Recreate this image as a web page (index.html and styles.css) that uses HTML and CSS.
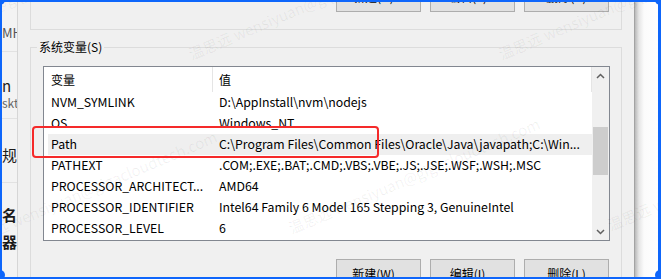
FILE: index.html
```html
<!DOCTYPE html>
<html lang="zh-CN">

<head>
    <meta charset="UTF-8">
    <meta name="viewport" content="width=device-width, initial-scale=1.0">
    <link rel="stylesheet" href="styles.css">
    <title>环境变量</title>
</head>

<body>
    <div class="screen">
        <div class="behind">
            <div class="behind-block b1">
                <div class="bt left mh">MHxx</div>
            </div>
            <div class="behind-block b2">
                <div class="bt left big">n</div>
                <div class="bt left small">sktop</div>
            </div>
            <div class="behind-block b3">
                <div class="bt right big">常规</div>
            </div>
            <div class="behind-block b4">
                <div class="bt right big bold">命名</div>
                <div class="bt right big bold gap">管理器</div>
            </div>
        </div>

        <div class="dialog">
            <div class="user-group">
                <button class="btn">新建(N)...</button>
                <button class="btn">编辑(E)...</button>
                <button class="btn">删除(D)</button>
            </div>

            <fieldset class="sys-group">
                <legend>系统变量(S)</legend>
                <div class="list">
                    <div class="list-main">
                        <div class="list-head">
                            <div class="hcell name">变量</div>
                            <div class="hcell value">值</div>
                        </div>
                        <div class="row">
                            <div class="cell name">NVM_SYMLINK</div>
                            <div class="cell value">D:\AppInstall\nvm\nodejs</div>
                        </div>
                        <div class="row">
                            <div class="cell name">OS</div>
                            <div class="cell value">Windows_NT</div>
                        </div>
                        <div class="row selected">
                            <div class="cell name">Path</div>
                            <div class="cell value">C:\Program Files\Common Files\Oracle\Java\javapath;C:\Win...</div>
                        </div>
                        <div class="row">
                            <div class="cell name">PATHEXT</div>
                            <div class="cell value">.COM;.EXE;.BAT;.CMD;.VBS;.VBE;.JS;.JSE;.WSF;.WSH;.MSC</div>
                        </div>
                        <div class="row">
                            <div class="cell name">PROCESSOR_ARCHITECT...</div>
                            <div class="cell value">AMD64</div>
                        </div>
                        <div class="row">
                            <div class="cell name">PROCESSOR_IDENTIFIER</div>
                            <div class="cell value">Intel64 Family 6 Model 165 Stepping 3, GenuineIntel</div>
                        </div>
                        <div class="row">
                            <div class="cell name">PROCESSOR_LEVEL</div>
                            <div class="cell value">6</div>
                        </div>
                    </div>
                    <div class="scrollbar">
                        <div class="sb-btn">
                            <svg width="9" height="6" viewBox="0 0 9 6"><path d="M1 5 L4.5 1.5 L8 5" fill="none" stroke="#606060" stroke-width="1.5"/></svg>
                        </div>
                        <div class="sb-track">
                            <div class="sb-thumb"></div>
                        </div>
                        <div class="sb-btn">
                            <svg width="9" height="6" viewBox="0 0 9 6"><path d="M1 1 L4.5 4.5 L8 1" fill="none" stroke="#606060" stroke-width="1.5"/></svg>
                        </div>
                    </div>
                </div>
                <div class="btn-row">
                    <button class="btn">新建(W)...</button>
                    <button class="btn">编辑(I)...</button>
                    <button class="btn">删除(L)</button>
                </div>
            </fieldset>
        </div>

        <div class="shadow"></div>
    </div>

    <!-- watermark + annotation layers -->
    <span class="wm" style="left:-117px; top:45px;">温思远 wensiyuan@gigacloudtech.com</span>
    <span class="wm" style="left:193px; top:45px;">温思远 wensiyuan@gigacloudtech.com</span>
    <span class="wm" style="left:503px; top:45px;">温思远 wensiyuan@gigacloudtech.com</span>
    <span class="wm" style="left:-30px; top:232px;">温思远 wensiyuan@gigacloudtech.com</span>
    <span class="wm" style="left:293px; top:219px;">温思远 wensiyuan@gigacloudtech.com</span>
    <span class="wm" style="left:612px; top:216px;">温思远 wensiyuan@gigacloudtech.com</span>

    <div class="mark"></div>

    <div class="frame"></div>
    <div class="dot tl"></div>
    <div class="dot tr"></div>
    <div class="dot bl"></div>
    <div class="dot br"></div>
</body>

</html>
```

FILE: styles.css
```css
body {
    margin: 0;
    font-family: "Noto Sans CJK SC", "Noto Sans", sans-serif;
    background-color: #fff;
    color: #000;
}

.screen {
    display: flex;
    width: 661px;
    height: 279px;
    overflow: hidden;
}

/* window behind the dialog */
.behind {
    flex: none;
    width: 17px;
    border-right: 1px solid #d6d6d6;
    background-color: #f3f3f3;
}

.behind-block {
    border-bottom: 1px solid #e2e2e2;
}

.b1 {
    height: 52px;
    padding-top: 25px;
    box-sizing: border-box;
}

.b2 {
    height: 67px;
    padding-top: 25px;
    box-sizing: border-box;
}

.b3 {
    height: 64px;
    padding-top: 27px;
    box-sizing: border-box;
}

.b4 {
    border-bottom: none;
    padding-top: 23px;
}

.bt {
    display: flex;
    overflow: hidden;
    white-space: nowrap;
    line-height: 16px;
}

.bt.left {
    justify-content: flex-start;
    padding-left: 2px;
}

.bt.right {
    justify-content: flex-end;
}

.mh {
    font-size: 13px;
    color: #555;
}

.big {
    font-size: 15px;
    line-height: 18px;
    color: #1a1a1a;
}

.small {
    font-size: 12px;
    color: #666;
}

.bold {
    font-weight: bold;
}

.gap {
    margin-top: 9px;
}

/* dialog */
.dialog {
    flex: none;
    width: 617px;
    box-sizing: border-box;
    padding: 0 12px;
    background-color: #f0f0f0;
    border-right: 1px solid #a3a3a3;
}

.shadow {
    flex: 1;
    background: linear-gradient(to right, #b9b9b9, #e6e6e6 4px, #fbfbfb 9px, #fff);
}

.user-group {
    height: 30px;
    box-sizing: border-box;
    border: 1px solid #dcdcdc;
    border-top: none;
    display: flex;
    justify-content: flex-end;
    align-items: flex-end;
    gap: 9px;
    padding: 0 12px 17px 0;
}

.btn {
    flex: none;
    width: 85px;
    height: 28px;
    box-sizing: border-box;
    padding: 0;
    border: 1px solid #adadad;
    background-color: #e1e1e1;
    font-family: "Noto Sans CJK SC", sans-serif;
    font-size: 12px;
    color: #000;
}

.user-group .btn {
    height: 32px;
}

.sys-group {
    margin: 9px 0 0;
    padding: 0 11px 0 12px;
    border: 1px solid #dcdcdc;
    min-width: 0;
}

.sys-group legend {
    margin-left: -6px;
    padding: 0 2px;
    font-size: 12px;
    line-height: 16px;
}

.list {
    margin-top: 11px;
    height: 175px;
    box-sizing: border-box;
    border: 1px solid #828790;
    background-color: #fff;
    display: flex;
    font-size: 12.3px;
}

.list-main {
    flex: 1;
    min-width: 0;
    overflow: hidden;
}

.list-head {
    display: flex;
    height: 25px;
    line-height: 25px;
    font-size: 12px;
}

.hcell {
    box-sizing: border-box;
    border-right: 1px solid #e5e5e5;
    white-space: nowrap;
}

.hcell.name {
    width: 169px;
    padding-left: 7px;
}

.hcell.value {
    flex: 1;
    padding-left: 6px;
}

.row {
    display: flex;
    height: 21px;
    line-height: 21px;
    margin-left: 4px;
}

.row.selected {
    background-color: #efefef;
}

.cell {
    white-space: nowrap;
    overflow: hidden;
    padding-left: 3px;
    box-sizing: border-box;
}

.cell.name {
    flex: none;
    width: 168px;
}

.cell.value {
    flex: 1;
}

.scrollbar {
    flex: none;
    width: 17px;
    background-color: #f0f0f0;
    display: flex;
    flex-direction: column;
}

.sb-btn {
    height: 17px;
    display: flex;
    align-items: center;
    justify-content: center;
}

.sb-track {
    flex: 1;
}

.sb-thumb {
    margin: 43px 1px 0 1px;
    height: 48px;
    background-color: #cdcdcd;
}

.btn-row {
    display: flex;
    justify-content: flex-end;
    gap: 9px;
    margin-top: 18px;
    padding-right: 1px;
}

/* overlays */
.wm {
    position: absolute;
    font-size: 15px;
    line-height: 18px;
    white-space: nowrap;
    color: rgba(0, 0, 0, 0.06);
    transform: rotate(-23deg);
    transform-origin: 0 100%;
    pointer-events: none;
}

.mark {
    position: absolute;
    left: 32px;
    top: 126px;
    width: 347px;
    height: 32px;
    box-sizing: border-box;
    border: 2.5px solid #f52a2a;
    border-radius: 4px;
}

.frame {
    position: absolute;
    left: 0;
    top: 0;
    width: 661px;
    height: 279px;
    box-sizing: border-box;
    border: 2px solid #0e66fb;
    border-right-width: 3px;
}

.dot {
    position: absolute;
    width: 10px;
    height: 10px;
    border-radius: 50%;
    background-color: #0e66fb;
}

.tl {
    left: -5px;
    top: -5px;
}

.tr {
    left: 655px;
    top: -5px;
}

.bl {
    left: -5px;
    top: 270px;
}

.br {
    left: 655px;
    top: 270px;
}
```
